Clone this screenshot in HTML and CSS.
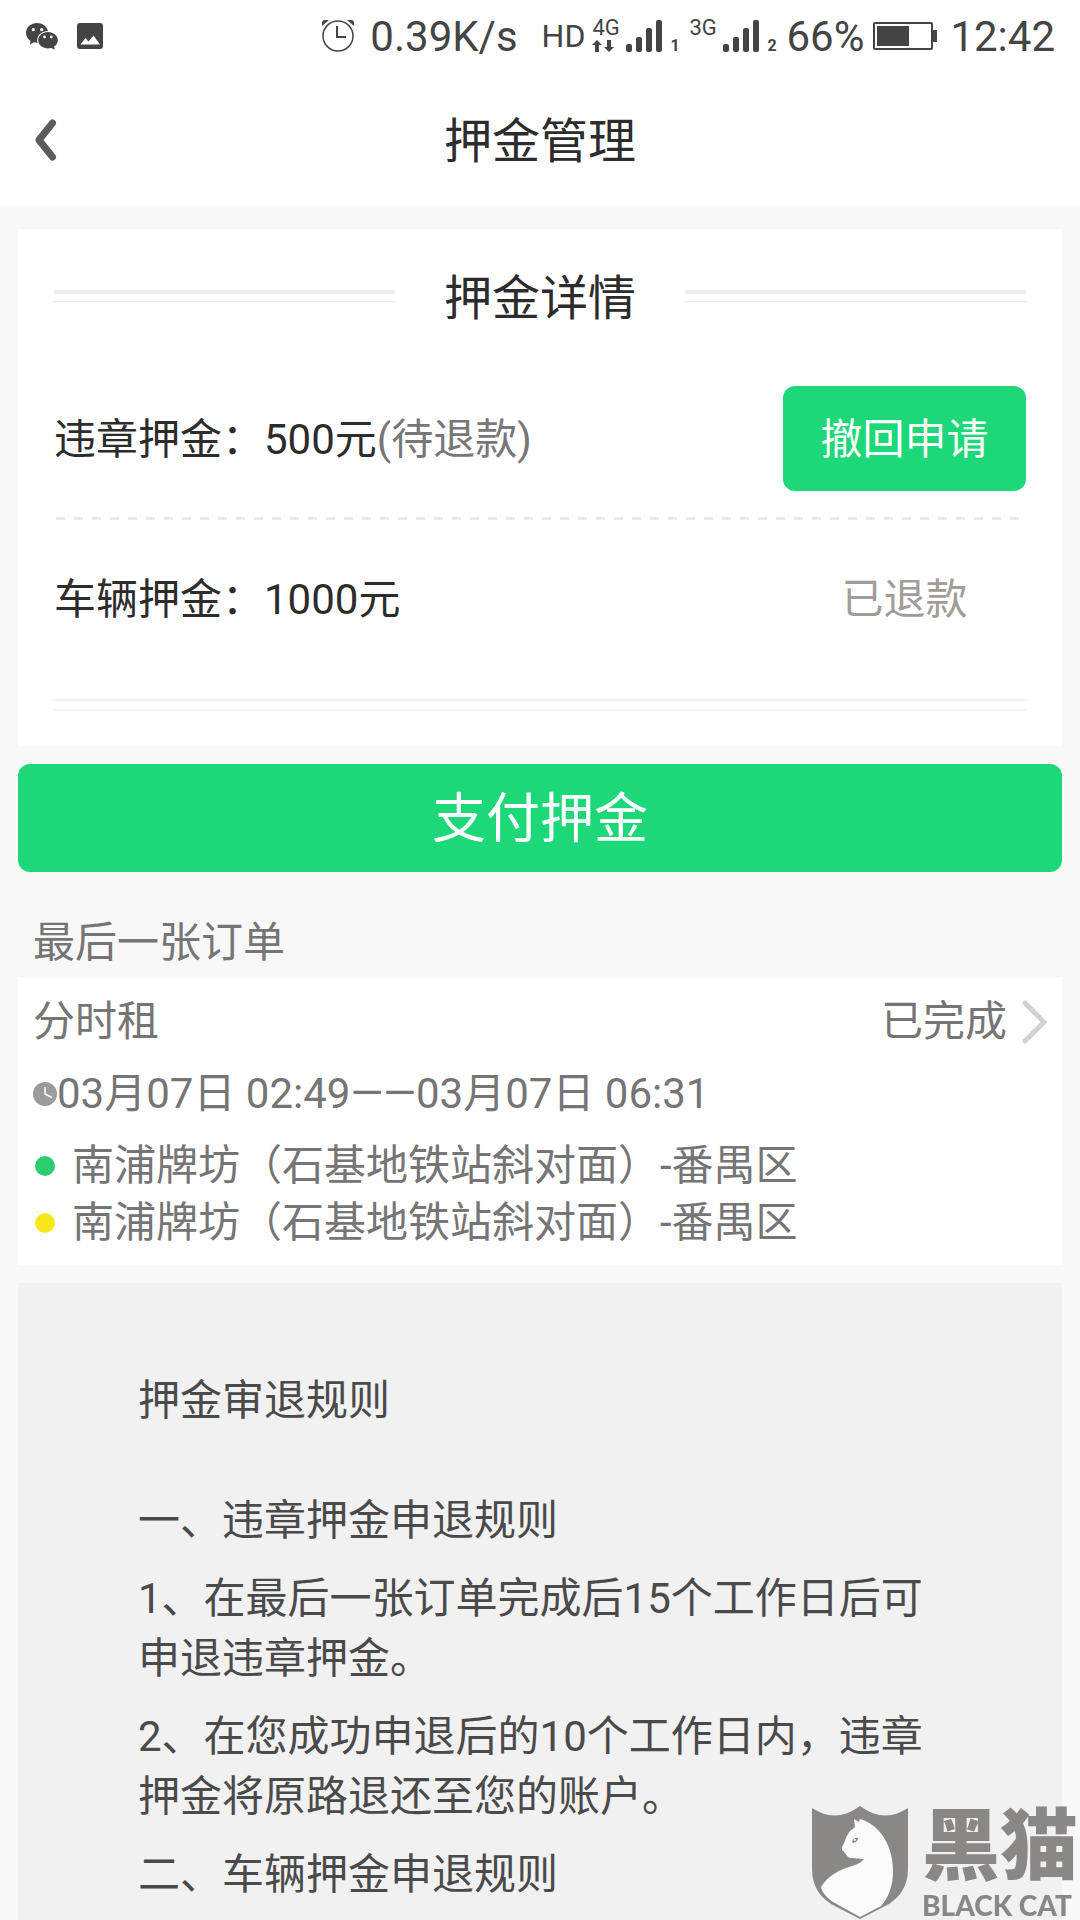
FILE: index.html
```html
<!DOCTYPE html>
<html lang="zh-CN">
<head>
    <meta charset="UTF-8">
    <meta name="viewport" content="width=device-width, initial-scale=1.0">
    <title>押金管理</title>
    <link rel="stylesheet" href="styles.css">
</head>
<body>
    <header class="header">
        <div class="status-bar">
            <div class="status-left">
                <svg width="32" height="27" viewBox="0 0 32 27" fill="#444">
                    <path d="M11 0C5 0 0 4.200 0 10c0 3.300 1.700 6 4.500 8L4 21.500l4-2.200c1.200.3 2.400.4 3.500.3C10 13 15 8 22 8 21 3.500 16.500 0 11 0z"/>
                    <path d="M22 9c-5.500 0-9.800 3.700-9.800 8.200s4.300 8.200 9.800 8.200c1.200 0 2.300-.2 3.300-.5l3.500 1.900-.7-3.200c2.300-1.500 3.700-3.800 3.700-6.400C31.800 12.700 27.500 9 22 9z"/>
                    <g fill="#fff">
                        <circle cx="7.300" cy="6.700" r="1.600"/>
                        <circle cx="15.700" cy="6.700" r="1.600"/>
                        <circle cx="18.500" cy="14" r="1.400"/>
                        <circle cx="25.300" cy="14" r="1.400"/>
                    </g>
                </svg>
                <svg width="26" height="26" viewBox="0 0 26 26">
                    <rect width="26" height="26" rx="3" fill="#444"/>
                    <path d="M3.500 21.500l5-6.500 3 3.500 5-6 6.500 9z" fill="#fff"/>
                </svg>
            </div>
            <div class="status-right">
                <svg width="32" height="32" viewBox="0 0 32 32" fill="none" stroke="#444">
                    <circle cx="16" cy="16" r="15" stroke-width="1.500"/>
                    <path d="M15 6v11h9" stroke-width="2"/>
                    <path d="M0 6V3q0-3 3-3h4zM32 6V3q0-3-3-3h-4z" fill="#444" stroke="none"/>
                </svg>
                <span class="speed">0.39K/s</span>
                <span class="hd">HD</span>
                <div class="network">
                    <span class="network-type">4G</span>
                    <svg width="22" height="12" viewBox="0 0 22 12" fill="#444">
                        <path d="M5 0l5 5H7v7H3V5H0zM17 12l-5-5h3V0h4v7h3z"/>
                    </svg>
                </div>
                <svg class="signal" width="36" height="32" viewBox="0 0 36 32" fill="#444">
                    <rect x="0" y="24" width="6" height="8" rx="2"/>
                    <rect x="10" y="17" width="6" height="15" rx="2"/>
                    <rect x="20" y="8" width="6" height="24" rx="2"/>
                    <rect x="30" y="0" width="6" height="32" rx="2"/>
                </svg>
                <span class="sim">1</span>
                <div class="network">
                    <span class="network-type">3G</span>
                </div>
                <svg class="signal" width="36" height="32" viewBox="0 0 36 32" fill="#444">
                    <rect x="0" y="24" width="6" height="8" rx="2"/>
                    <rect x="10" y="17" width="6" height="15" rx="2"/>
                    <rect x="20" y="8" width="6" height="24" rx="2"/>
                    <rect x="30" y="0" width="6" height="32" rx="2"/>
                </svg>
                <span class="sim">2</span>
                <span class="percent">66%</span>
                <svg class="battery" width="64" height="28" viewBox="0 0 64 28">
                    <rect x="1" y="1" width="58" height="26" rx="1" fill="none" stroke="#444" stroke-width="2"/>
                    <rect x="4" y="4" width="32" height="20" fill="#444"/>
                    <rect x="59" y="8" width="5" height="12" fill="#444"/>
                </svg>
                <span class="clock">12:42</span>
            </div>
        </div>
        <div class="nav-bar">
            <button type="button" class="back" aria-label="返回">
                <svg width="22" height="42" viewBox="0 0 22 42" fill="none" stroke="#5b5b5b" stroke-width="7" stroke-linecap="round" stroke-linejoin="round">
                    <path d="M17.500 4L4 21l13.500 17"/>
                </svg>
            </button>
            <h1>押金管理</h1>
        </div>
    </header>

    <main class="content">
        <section class="card deposit">
            <div class="deposit-title">
                <span class="lines"></span>
                <h2>押金详情</h2>
                <span class="lines"></span>
            </div>
            <div class="deposit-row">
                <p>违章押金：500元<span class="pending">(待退款)</span></p>
                <button type="button" class="btn-cancel">撤回申请</button>
            </div>
            <div class="dashed"></div>
            <div class="deposit-row">
                <p>车辆押金：1000元</p>
                <p class="refunded">已退款</p>
            </div>
            <div class="lines-bottom"></div>
        </section>

        <button type="button" class="btn-pay">支付押金</button>

        <h3 class="section-label">最后一张订单</h3>
        <section class="card order">
            <a href="#" class="order-head">
                <span>分时租</span>
                <span class="order-state">已完成
                    <svg width="25" height="44" viewBox="0 0 25 44" fill="none" stroke="#d2d2d2" stroke-width="5" stroke-linecap="round">
                        <path d="M3 3l19 19L3 41"/>
                    </svg>
                </span>
            </a>
            <div class="order-time">
                <svg width="24" height="24" viewBox="0 0 24 24">
                    <circle cx="12" cy="12" r="12" fill="#9b9b9b"/>
                    <path d="M12 5v7l7 3.500" fill="none" stroke="#fff" stroke-width="1.500"/>
                </svg>
                <span>03月07日 02:49——03月07日 06:31</span>
            </div>
            <ul class="stations">
                <li class="start">南浦牌坊（石基地铁站斜对面）-番禺区</li>
                <li class="end">南浦牌坊（石基地铁站斜对面）-番禺区</li>
            </ul>
        </section>

        <section class="rules">
            <h3>押金审退规则</h3>
            <p>一、违章押金申退规则</p>
            <p>1、在最后一张订单完成后15个工作日后可申退违章押金。</p>
            <p>2、在您成功申退后的10个工作日内，违章押金将原路退还至您的账户。</p>
            <p>二、车辆押金申退规则</p>
        </section>
    </main>

    <div class="watermark">
        <svg width="98" height="115" viewBox="0 0 98 115">
            <path d="M1 3Q25 19 49 1Q73 19 97 3V64C97 80 90 91 78 99L49 114L20 99C8 91 1 80 1 64z" fill="#8a8787"/>
            <path d="M43 14L48 17L49 14C70 20 82 42 82 66C82 82 77 93 70 101L49 112L22 97C15 92 11 87 10 82C16 72 27 65 41 61C47 59 51 57 53 54L40 53C36 53 35 48 31 45L31 42C34 38 34 33 37 29C39 25 42 24 44 22z" fill="#fafafa"/>
            <path d="M41 37q2-5 6-4q0 4-5 5z" fill="#8a8787"/>
            <circle cx="44" cy="35" r="1" fill="#fafafa"/>
        </svg>
        <div class="watermark-text">
            <span class="watermark-cn">黑猫</span>
            <span class="watermark-en">BLACK CAT</span>
        </div>
    </div>
</body>
</html>
```
FILE: styles.css
```css
* {
    box-sizing: border-box;
    margin: 0;
    padding: 0;
}
body {
    display: flex;
    flex-direction: column;
    min-height: 100vh;
    background-color: #f8f8f8;
    color: #2c2c2c;
    font-family: Roboto, "Noto Sans CJK SC", sans-serif;
    font-size: 42px;
    line-height: 60px;
}
h1, h2, h3 {
    font-weight: normal;
}
svg {
    display: block;
    flex-shrink: 0;
}
button {
    border: none;
    font-family: inherit;
    line-height: 60px;
    cursor: pointer;
}

/* header */
.header {
    background-color: #fff;
}
.status-bar {
    display: flex;
    justify-content: space-between;
    align-items: center;
    height: 72px;
    padding: 0 25px 0 26px;
    color: #444;
}
.status-left, .status-right {
    display: flex;
    align-items: center;
}
.status-left {
    gap: 19px;
}
.speed, .percent, .clock {
    padding-top: 2px;
}
.speed {
    margin: 0 24px 0 16px;
}
.hd {
    margin-right: 7px;
    font-size: 32px;
}
.network {
    width: 26px;
    height: 32px;
}
.network-type {
    display: block;
    height: 20px;
    font-size: 22px;
    line-height: 16px;
}
.signal {
    margin: 0 8px;
}
.sim {
    width: 9px;
    height: 32px;
    margin-right: 10px;
    font-size: 16px;
    font-weight: bold;
    line-height: 52px;
}
.battery {
    margin: 0 13px 0 9px;
}
.nav-bar {
    display: grid;
    grid-template-columns: 90px 1fr 90px;
    align-items: center;
    height: 135px;
}
.nav-bar h1 {
    padding-top: 4px;
    font-size: 48px;
    text-align: center;
}
.back {
    padding-left: 35px;
    background: none;
}

/* cards */
.content {
    display: flex;
    flex: 1;
    flex-direction: column;
    padding: 22px 18px 0;
}
.card {
    background-color: #fff;
}
.deposit {
    padding: 40px 36px 35px;
}
.deposit-title {
    display: flex;
    gap: 49px;
    margin-bottom: 31px;
}
.deposit-title h2 {
    font-size: 48px;
}
.lines {
    flex: 1;
    height: 12px;
    margin-top: 21px;
    border-top: 4px solid #ededed;
    border-bottom: 1px solid #ededed;
}
.lines-bottom {
    height: 12px;
    margin-top: 22px;
    border-top: 2px solid #f2f2f2;
    border-bottom: 2px solid #f2f2f2;
}
.deposit-row {
    display: flex;
    justify-content: space-between;
    align-items: center;
    min-height: 157px;
}
.deposit-row p {
    padding-top: 3px;
}
.pending {
    color: #777;
}
.btn-cancel {
    width: 243px;
    height: 105px;
    padding-top: 3px;
    border-radius: 12px;
    background-color: #1dd878;
    color: #fff;
    font-size: 42px;
}
.refunded {
    width: 243px;
    color: #a29c98;
    text-align: center;
}
.dashed {
    height: 3px;
    margin: 0 2px;
    background: repeating-linear-gradient(to right, #eaeaea 0, #eaeaea 9px, #fff 9px, #fff 18px);
}
.btn-pay {
    height: 108px;
    margin-top: 18px;
    padding-top: 3px;
    border-radius: 12px;
    background-color: #1dd878;
    color: #fff;
    font-size: 54px;
}

/* last order */
.section-label {
    padding: 41px 15px 4px;
    color: #757575;
    font-size: 42px;
}
.order {
    padding: 15px 15px 14px;
    color: #757575;
}
.order-head {
    display: flex;
    justify-content: space-between;
    color: inherit;
    text-decoration: none;
}
.order-state {
    display: flex;
    align-items: center;
    gap: 15px;
}
.order-time {
    display: flex;
    align-items: center;
    margin: 12px 0 13px;
}
.stations {
    list-style: none;
}
.stations li {
    display: flex;
    align-items: center;
    gap: 17px;
    padding-left: 2px;
    line-height: 57px;
}
.stations li::before {
    content: "";
    width: 20px;
    height: 20px;
    border-radius: 50%;
}
.start::before {
    background-color: #2ecc71;
}
.end::before {
    background-color: #f9e71e;
}

/* rules */
.rules {
    flex: 1;
    margin-top: 18px;
    padding: 88px 120px 0;
    background-color: #f1f1f1;
    color: #4a4a4a;
}
.rules h3 {
    margin-bottom: 60px;
    font-size: 42px;
}
.rules p {
    margin-bottom: 18px;
}
.rules p:last-child {
    margin-bottom: 0;
}

/* watermark over the bottom corner */
.watermark {
    position: fixed;
    right: 2px;
    bottom: 0;
    display: flex;
    gap: 13px;
    color: #8a8787;
}
.watermark-text {
    display: flex;
    flex-direction: column;
}
.watermark-cn {
    font-size: 78px;
    font-weight: 900;
    line-height: 86px;
}
.watermark-en {
    font-family: Lato, sans-serif;
    font-size: 28px;
    font-weight: 900;
    line-height: 28px;
    white-space: nowrap;
}
```
